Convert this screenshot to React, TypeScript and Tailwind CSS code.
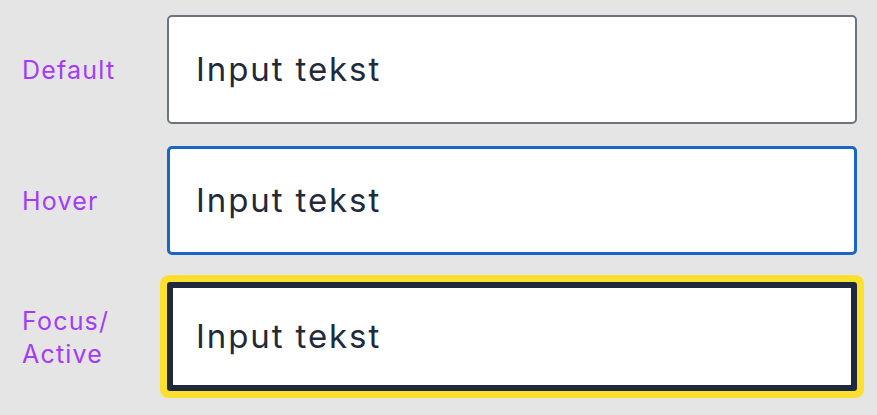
const fieldText = "Input tekst";

function Row({
  label,
  boxClass,
  rowClass,
}: {
  label: React.ReactNode;
  boxClass: string;
  rowClass?: string;
}) {
  return (
    <div className={`flex items-center ${rowClass ?? ""}`}>
      <div className="w-[145px] shrink-0 pt-[2px] text-[25px] leading-[33px] tracking-[1.2px] text-[#a43cf4]">
        {label}
      </div>
      <div
        className={`flex h-[109px] w-[690px] items-center bg-white text-[33px] tracking-[1.9px] text-[#1f2a3b] ${boxClass}`}
      >
        {fieldText}
      </div>
    </div>
  );
}

export default function App() {
  return (
    <div
      className="h-[415px] w-[877px] bg-[#e5e5e5] pl-[22px] pt-[15px]"
      style={{ fontFamily: "Inter, 'Noto Sans', sans-serif" }}
    >
      <Row label="Default" boxClass="rounded-[5px] border-2 border-[#6e7380] pl-[27px]" />
      <Row
        label="Hover"
        rowClass="mt-[22px]"
        boxClass="rounded-[5px] border-[3px] border-[#1a66c4] pl-[26px]"
      />
      <Row
        label={
          <>
            Focus/
            <br />
            Active
          </>
        }
        rowClass="mt-[27px]"
        boxClass="rounded-[3px] border-[6px] border-[#1e293b] pl-[23px] shadow-[0_0_0_7px_#fde02e]"
      />
    </div>
  );
}
